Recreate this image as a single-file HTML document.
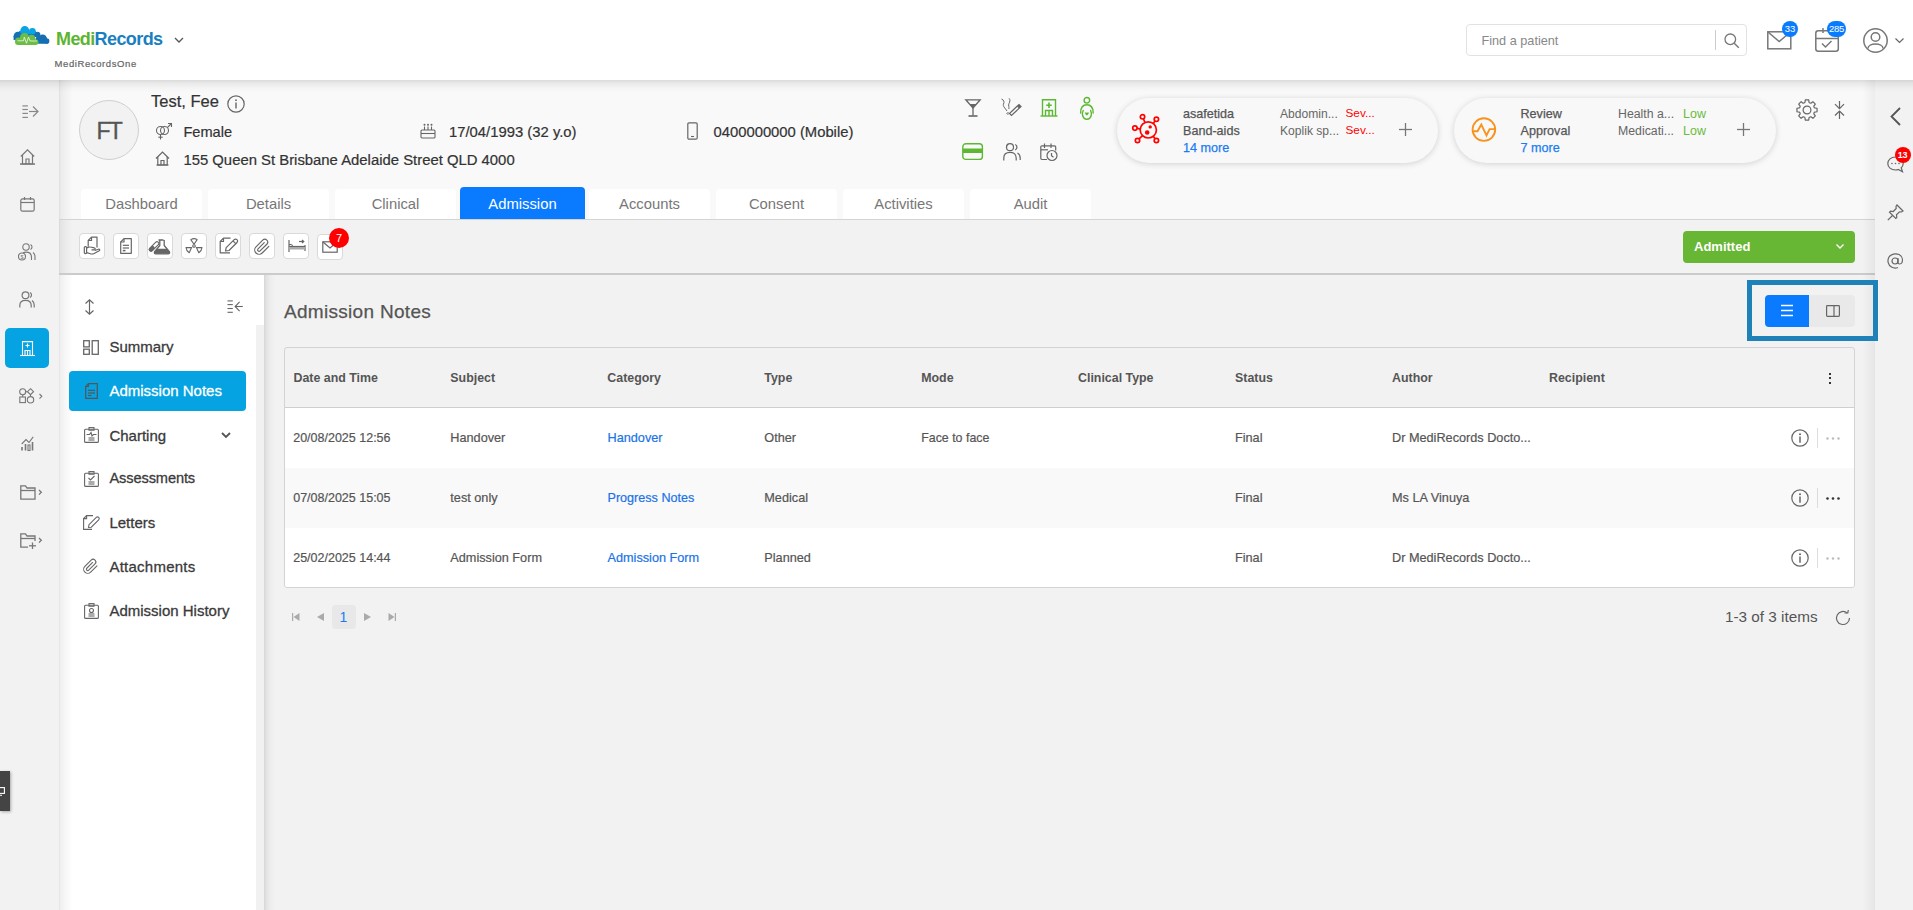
<!DOCTYPE html>
<html><head><meta charset="utf-8">
<style>
*{box-sizing:border-box;margin:0;padding:0}
html,body{width:1913px;height:910px;overflow:hidden;background:#f2f2f2;font-family:"Liberation Sans",sans-serif;color:#444}
svg{display:block;position:absolute;overflow:visible}
.t{position:absolute;white-space:nowrap;line-height:1}
#hdr{position:absolute;left:0;top:0;width:1913px;height:80px;background:#fff;z-index:5}
#hsh{position:absolute;left:0;top:80px;width:1913px;height:12px;background:linear-gradient(to bottom,rgba(0,0,0,.12),rgba(0,0,0,.065) 25%,rgba(0,0,0,.025) 65%,rgba(0,0,0,0));z-index:4;pointer-events:none}
#rail{position:absolute;left:0;top:80px;width:59px;height:830px;background:#f2f2f2;z-index:3}
#ph{position:absolute;left:59px;top:80px;width:1816px;height:140px;background:#f9f9f9;border-bottom:1px solid #d4d4d4}
#tb{position:absolute;left:59px;top:220px;width:1816px;height:55px;background:#f2f2f2;border-bottom:2px solid #cbcbcb}
.shl{position:absolute;left:0;top:0;width:14px;height:100%;background:linear-gradient(to right,rgba(0,0,0,.11),rgba(0,0,0,.06) 12%,rgba(0,0,0,.03) 45%,rgba(0,0,0,0))}
#side{position:absolute;left:59px;top:275px;width:205px;height:635px;background:#fff}
#track{position:absolute;left:256px;top:325px;width:8px;height:585px;background:#f1f1f1}
#content{position:absolute;left:264px;top:275px;width:1611px;height:635px;background:#f2f2f2}
#rrail{position:absolute;left:1875px;top:80px;width:38px;height:830px;background:#f2f2f2}
.rsh{position:absolute;left:1862px;top:80px;width:13px;height:830px;background:linear-gradient(to right,rgba(0,0,0,0),rgba(0,0,0,.05))}
.tab{position:absolute;top:189px;width:121px;height:30px;background:#fff;border-radius:4px 4px 0 0;color:#777;font-size:14.8px;text-align:center;line-height:30px}
.tab.act{top:187px;width:125px;height:32px;background:#0a7bff;color:#fff;line-height:35px}
.tbtn{position:absolute;top:233px;width:26px;height:26px;background:#fff;border:1px solid #d9d9d9;border-radius:4px}
.pill{position:absolute;top:98px;height:65px;border-radius:33px;background:#f8f8f8;box-shadow:0 1px 6px rgba(0,0,0,.16)}
.ps{font-size:12.6px;color:#555}
.sb{-webkit-text-stroke:.25px #555}
.mi{font-size:15px;color:#3a3a3a;-webkit-text-stroke:.3px #3a3a3a}
.th{font-size:12.4px;font-weight:bold;color:#555}
.td{font-size:12.7px;color:#555;-webkit-text-stroke:.2px #555}
.lk{color:#1a73e8;-webkit-text-stroke:.2px #1a73e8}
</style></head>
<body>
<!-- HEADER -->
<div id="hdr">
  <!-- logo -->
  <svg style="left:10px;top:20px" width="42" height="30" viewBox="0 0 42 30">
    
    <g fill="#0aa3e3"><circle cx="14.8" cy="10.6" r="4.5"/><circle cx="22.4" cy="11.3" r="3.4"/><rect x="9" y="11" width="17" height="4"/></g><rect x="9" y="14" width="17" height="3" fill="#1678bb"/>
    <g fill="#1570b5"><circle cx="8" cy="16.2" r="4.4"/><rect x="3.6" y="16" width="8" height="4"/><circle cx="27.5" cy="14.5" r="2.8"/></g>
    <g fill="#146fb2"><circle cx="32.6" cy="18.8" r="4.4"/><circle cx="36.6" cy="21" r="2.8"/><circle cx="28.5" cy="19.5" r="3"/><rect x="26" y="19" width="13" height="4.7" rx="2"/></g>
    <g fill="#6cbd45"><circle cx="14.5" cy="17.5" r="4.6"/><circle cx="21.6" cy="18.4" r="3.6"/><circle cx="8.4" cy="20.6" r="3.2"/><rect x="5.1" y="19.5" width="23.4" height="5.4" rx="2.4"/></g>
    <polyline points="7.5,20.8 13.5,20.8 14.3,17.2 16.5,23.2 18.5,17.2 20.1,21 27,21" fill="none" stroke="#fff" stroke-width=".8" stroke-opacity=".9"/>
  </svg>
  <div class="t" style="left:56px;top:29.5px;font-size:18px;font-weight:bold;letter-spacing:-.6px"><span style="color:#5cb531">Medi</span><span style="color:#1a7fc1">Records</span></div>
  <svg style="left:174px;top:37px" width="10" height="6" viewBox="0 0 10 6"><polyline points="1,1 5,5 9,1" fill="none" stroke="#555" stroke-width="1.3"/></svg>
  <div class="t" style="left:54.5px;top:58.5px;font-size:9.5px;letter-spacing:.6px;color:#666;-webkit-text-stroke:.2px #666">MediRecordsOne</div>
  <!-- search -->
  <div style="position:absolute;left:1466px;top:24px;width:281px;height:32px;border:1px solid #e2e2e2;border-radius:4px;background:#fff"></div>
  <div class="t" style="left:1481.5px;top:35px;font-size:12.7px;color:#888">Find a patient</div>
  <div style="position:absolute;left:1715px;top:30px;width:1px;height:20px;background:#ccc"></div>
  <svg style="left:1724px;top:32.5px" width="16" height="16" viewBox="0 0 16 16"><circle cx="6.3" cy="6.3" r="5.3" fill="none" stroke="#777" stroke-width="1.3"/><line x1="10.2" y1="10.2" x2="14.8" y2="14.8" stroke="#777" stroke-width="1.4"/></svg>
  <!-- mail -->
  <svg style="left:1767px;top:31px" width="25" height="19" viewBox="0 0 25 19"><rect x=".8" y=".8" width="23" height="17" fill="none" stroke="#777" stroke-width="1.5"/><polyline points="1,1 12.2,10.5 23.5,1" fill="none" stroke="#777" stroke-width="1.5"/></svg>
  <div style="position:absolute;left:1782px;top:21px;width:16px;height:16px;border-radius:8px;background:#0a7bff;color:#fff;font-size:9.5px;line-height:16px;text-align:center">33</div>
  <!-- calendar -->
  <svg style="left:1815px;top:28px" width="25" height="24" viewBox="0 0 25 24"><rect x=".8" y="2.8" width="22.5" height="20.5" rx="2.5" fill="none" stroke="#777" stroke-width="1.5"/><line x1="1" y1="10.5" x2="23" y2="10.5" stroke="#777" stroke-width="1.5"/><line x1="8" y1="0" x2="8" y2="5" stroke="#777" stroke-width="1.5"/><polyline points="7,15.5 10.5,19 16.5,13" fill="none" stroke="#777" stroke-width="1.5"/></svg>
  <div style="position:absolute;left:1827px;top:21px;width:19px;height:16px;border-radius:8px;background:#0a7bff;color:#fff;font-size:9.5px;line-height:16px;text-align:center;letter-spacing:-.3px">285</div>
  <!-- user -->
  <svg style="left:1863px;top:28px" width="25" height="25" viewBox="0 0 25 25"><circle cx="12.5" cy="12.5" r="11.7" fill="none" stroke="#777" stroke-width="1.5"/><circle cx="12.5" cy="9" r="4.3" fill="none" stroke="#777" stroke-width="1.5"/><path d="M5 20.5 C5 14.5 20 14.5 20 20.5" fill="none" stroke="#777" stroke-width="1.5"/></svg>
  <svg style="left:1895px;top:37.5px" width="9" height="5" viewBox="0 0 9 5"><polyline points=".5,.5 4.5,4.5 8.5,.5" fill="none" stroke="#666" stroke-width="1.2"/></svg>
</div>

<div id="hsh"></div>
<!-- LEFT RAIL -->
<div id="rail">
<svg style="left:22px;top:25px" width="17" height="13" viewBox="0 0 17 13"><g fill="none" stroke="#888" stroke-width="1.2"><line x1=".4" y1=".9" x2="5.9" y2=".9"/><line x1=".4" y1="4.5" x2="5.9" y2="4.5"/><line x1=".4" y1="8.4" x2="5.9" y2="8.4"/><line x1=".4" y1="12.4" x2="5.9" y2="12.4"/><line x1="7" y1="6.5" x2="16" y2="6.5"/><polyline points="11,1.5 16,6.5 11,11.5"/></g></svg>
<svg style="left:20px;top:68.5px" width="15" height="16" viewBox="0 0 15 16"><g fill="none" stroke="#777" stroke-width="1.2"><polyline points=".8,7.5 7.5,.8 14.2,7.5"/><polyline points="2.5,6 2.5,15 12.5,15 12.5,6"/><polyline points="6,15 6,10 9,10 9,15"/><line x1="0" y1="15" x2="15" y2="15" stroke-width="1.5"/></g></svg>
<svg style="left:20px;top:117px" width="15" height="15" viewBox="0 0 15 15"><g fill="none" stroke="#777" stroke-width="1.2"><rect x=".8" y="1.8" width="13.4" height="12.4" rx="1.8"/><line x1="1" y1="5.5" x2="14" y2="5.5"/><line x1="4.5" y1="0" x2="4.5" y2="3"/><line x1="10.5" y1="0" x2="10.5" y2="3"/></g></svg>
<svg style="left:18px;top:163px" width="18" height="18" viewBox="0 0 18 18"><g fill="none" stroke="#777" stroke-width="1.1"><circle cx="8" cy="4" r="3.2"/><path d="M12.5 1.5 C14.5 2.5 14.5 5.5 12.5 6.5"/><path d="M5 9.7 C6 9.3 7 9.1 8 9.1 C11.5 9.1 13.5 11 13.5 14.5 L13.5 17"/><path d="M15 9.5 C16.5 10.5 17 12 17 14 L17 17"/><circle cx="4" cy="13.5" r="3.5"/></g><text x="4" y="15.8" font-size="5.5" text-anchor="middle" fill="#777" font-family="Liberation Sans">$</text></svg>
<svg style="left:18.5px;top:211px" width="16" height="17" viewBox="0 0 16 17"><g fill="none" stroke="#777" stroke-width="1.2"><circle cx="6.5" cy="4.2" r="3.4"/><path d="M11 1.5 C13 2.5 13 5.5 11 6.5"/><path d="M.8 16.5 L.8 14.5 C.8 11 3 9.3 6.5 9.3 C10 9.3 12.2 11 12.2 14.5 L12.2 16.5"/><path d="M13 9.5 C14.5 10.5 15.2 12 15.2 14 L15.2 16.5"/></g></svg>
<div style="position:absolute;left:5px;top:248px;width:44px;height:40px;border-radius:5px;background:#05a3e2"></div>
<svg style="left:19.5px;top:260.5px" width="15" height="15" viewBox="0 0 15 15"><g fill="none" stroke="#fff" stroke-width="1.1"><path d="M2.5 14.5 L2.5 .6 L12.5 .6 L12.5 14.5"/><line x1="0" y1="14.5" x2="15" y2="14.5"/><path d="M5 14.5 L5 9.5 L10 9.5 L10 14.5"/><line x1="7.5" y1="9.5" x2="7.5" y2="14.5"/><line x1="7.5" y1="2.5" x2="7.5" y2="6.5"/><line x1="5.5" y1="4.5" x2="9.5" y2="4.5"/></g></svg>
<svg style="left:18.5px;top:307.5px" width="24" height="16" viewBox="0 0 24 16"><g fill="none" stroke="#777" stroke-width="1.1"><circle cx="3.7" cy="3.7" r="3"/><path d="M11.5 .7 L14.5 3.7 L11.5 6.7 L8.5 3.7Z"/><rect x=".8" y="9" width="5.6" height="5.6"/><circle cx="11.5" cy="11.8" r="3.2"/><line x1="3.7" y1="6.7" x2="3.7" y2="9"/><line x1="6.5" y1="3.7" x2="8.5" y2="3.7"/><line x1="11.5" y1="6.7" x2="11.5" y2="8.6"/><polyline points="20.5,6 22.8,8.3 20.5,10.6"/></g></svg>
<svg style="left:21px;top:356px" width="13" height="15" viewBox="0 0 13 15"><g fill="none" stroke="#777" stroke-width="1.1"><polyline points=".7,8 5,3.5 8,6.5 12.2,.8"/><line x1="1" y1="11" x2="1" y2="14.5" stroke-width="1.6"/><line x1="4.5" y1="8" x2="4.5" y2="14.5" stroke-width="1.6"/><rect x="7" y="9" width="2" height="5.5"/><line x1="11.5" y1="6" x2="11.5" y2="14.5" stroke-width="1.6"/></g></svg>
<svg style="left:20px;top:405px" width="22" height="15" viewBox="0 0 22 15"><g fill="none" stroke="#777" stroke-width="1.3"><path d="M.8 14.2 L.8 .8 L5.5 .8 L7 3 L15 3 L15 14.2Z"/><line x1="1" y1="5.5" x2="15" y2="5.5"/><polyline points="19,5 21.3,7.3 19,9.6"/></g></svg>
<svg style="left:20px;top:453px" width="22" height="16" viewBox="0 0 22 16"><g fill="none" stroke="#777" stroke-width="1.3"><path d="M8 14.2 L.8 14.2 L.8 .8 L5.5 .8 L7 3 L15 3 L15 8"/><line x1="1" y1="5.5" x2="15" y2="5.5"/><line x1="12.5" y1="9.5" x2="12.5" y2="16"/><line x1="9" y1="12.8" x2="16" y2="12.8"/><polyline points="19,5 21.3,7.3 19,9.6"/></g></svg>
</div>

<!-- PATIENT HEADER -->
<div id="ph"><div class="shl"></div></div>
<div style="position:absolute;left:79px;top:100px;width:60px;height:60px;border-radius:30px;background:#f2f2f2;border:1px solid #cfcfcf"></div>
<div class="t" style="left:96.6px;top:120px;font-size:23px;color:#555;letter-spacing:-1.8px;-webkit-text-stroke:.35px #555">FT</div>
<div class="t" style="left:151px;top:93px;font-size:16.5px;color:#333;-webkit-text-stroke:.2px #333">Test, Fee</div>
<svg style="left:227px;top:95px" width="18" height="18" viewBox="0 0 18 18"><circle cx="9" cy="9" r="8.2" fill="none" stroke="#666" stroke-width="1.2"/><circle cx="9" cy="5.2" r=".9" fill="#666"/><line x1="9" y1="7.5" x2="9" y2="13.5" stroke="#666" stroke-width="1.4"/></svg>

<div class="t" style="left:183.4px;top:125px;font-size:14.6px;color:#333;-webkit-text-stroke:.2px #333">Female</div>
<div class="t" style="left:449px;top:124.5px;font-size:14.84px;color:#333;-webkit-text-stroke:.2px #333">17/04/1993 (32 y.o)</div>
<div class="t" style="left:713.5px;top:124.5px;font-size:14.81px;color:#333;-webkit-text-stroke:.2px #333">0400000000 (Mobile)</div>
<div class="t" style="left:183.4px;top:153.3px;font-size:14.86px;color:#333;-webkit-text-stroke:.2px #333">155 Queen St Brisbane Adelaide Street QLD 4000</div>

<!-- patient icons -->
<svg style="left:155px;top:122px" width="18" height="18" viewBox="0 0 18 18"><g fill="none" stroke="#666" stroke-width="1.1"><circle cx="5.5" cy="8.5" r="4"/><circle cx="9.5" cy="8.5" r="4"/><line x1="5.5" y1="12.5" x2="5.5" y2="17.5"/><line x1="3.3" y1="15.2" x2="7.7" y2="15.2"/><line x1="12.3" y1="5.7" x2="16.5" y2="1.5"/><polyline points="13,1.5 16.5,1.5 16.5,5"/></g></svg>
<svg style="left:155px;top:151px" width="15" height="15" viewBox="0 0 15 15"><g fill="none" stroke="#666" stroke-width="1.2"><polyline points="1,7.5 7.5,1 14,7.5"/><polyline points="2.8,6 2.8,14 12.2,14 12.2,6"/><polyline points="6,14 6,9.5 9,9.5 9,14"/><line x1="1.5" y1="14" x2="13.5" y2="14"/></g></svg>
<svg style="left:420px;top:123px" width="16" height="16" viewBox="0 0 16 16"><g fill="none" stroke="#666" stroke-width="1.1"><rect x="1" y="7" width="14" height="8" rx="1"/><line x1="1" y1="10.5" x2="15" y2="10.5"/><line x1="4.5" y1="3.5" x2="4.5" y2="7"/><line x1="8" y1="3.5" x2="8" y2="7"/><line x1="11.5" y1="3.5" x2="11.5" y2="7"/></g><circle cx="4.5" cy="1.8" r="1" fill="#666"/><circle cx="8" cy="1.8" r="1" fill="#666"/><circle cx="11.5" cy="1.8" r="1" fill="#666"/></svg>
<svg style="left:687px;top:122px" width="11" height="18" viewBox="0 0 11 18"><rect x=".8" y=".8" width="9.4" height="16.4" rx="1.2" fill="none" stroke="#666" stroke-width="1.2"/><line x1="4" y1="14.5" x2="7" y2="14.5" stroke="#666" stroke-width="1.1"/></svg>

<svg style="left:965px;top:99px" width="16" height="18" viewBox="0 0 16 18"><g fill="none" stroke="#666" stroke-width="1.3"><path d="M.8 .8 L15.2 .8 L8 9 Z"/><line x1="8" y1="9" x2="8" y2="16.5"/><line x1="3.5" y1="17" x2="12.5" y2="17" stroke-width="1.6"/></g><path d="M4.5 5 L11.5 5 L8 9Z" fill="#666"/></svg>
<svg style="left:1001px;top:98px" width="21" height="19" viewBox="0 0 21 19"><g fill="none" stroke="#666" stroke-width="1"><path d="M.5 1 C3 2 3.5 4 2.5 6 C1.5 8 4 10 6 13"/><path d="M8 .3 C9.5 2 9 3.5 8 5.5 C7 7.5 8.5 9 7.8 11"/><line x1="5.5" y1="15" x2="7.2" y2="16.8"/><line x1="6.5" y1="14" x2="8.2" y2="15.8"/></g><path d="M8.5 15.5 L18 6.5 L20 8.5 L10.5 17.5Z" fill="none" stroke="#666" stroke-width="1.2"/><path d="M16 8.4 L18 6.5 L20 8.5 L18 10.4Z" fill="#666"/></svg>
<svg style="left:1040px;top:99px" width="18" height="18" viewBox="0 0 18 18"><g fill="none" stroke="#5cb832" stroke-width="1.4"><path d="M2.5 17 L2.5 .8 L15.5 .8 L15.5 17"/><line x1=".5" y1="17" x2="17.5" y2="17"/><path d="M5.5 17 L5.5 11.5 L12.5 11.5 L12.5 17"/><line x1="9" y1="11.5" x2="9" y2="17"/></g><path d="M8.2 3.5h1.6v2h2v1.6h-2v2H8.2v-2h-2V5.5h2z" fill="#5cb832"/></svg>
<svg style="left:1080px;top:96.5px" width="15" height="24" viewBox="0 0 15 24"><g fill="none" stroke="#5cb832" stroke-width="1.4" stroke-linecap="round"><circle cx="6.9" cy="3.3" r="2.8"/><path d="M.6 16 C.6 10.2 3.5 7.8 6.9 7.8 C10.3 7.8 13.2 10.2 13.2 16"/><path d="M3.2 13.5 C2.5 15 2.2 16.5 2.5 18 C3 20.5 4.8 22.2 6.9 22.2 C9 22.2 10.8 20.5 11.3 18 C11.6 16.5 11.3 15 10.6 13.5"/></g><path d="M5 15.9 C5 15 6.2 15 6.9 15.9 C7.6 15 8.8 15 8.8 15.9 C8.8 16.9 6.9 18.4 6.9 18.4 C6.9 18.4 5 16.9 5 15.9Z" fill="#5cb832"/></svg>
<svg style="left:962px;top:143px" width="22" height="18" viewBox="0 0 22 18"><rect x=".8" y=".8" width="19.6" height="15.6" rx="3" fill="none" stroke="#5cb832" stroke-width="1.4"/><rect x="1" y="5.5" width="19.4" height="4.5" fill="#5cb832"/></svg>
<svg style="left:1002.5px;top:143px" width="18" height="18" viewBox="0 0 18 18"><g fill="none" stroke="#666" stroke-width="1.2"><circle cx="7" cy="4.2" r="3.5"/><path d="M12.2 1.5 C14.5 2.5 14.5 6 12.2 7"/><path d="M.8 17.5 L.8 15 C.8 11 3.5 9.3 7 9.3 C10.5 9.3 13.2 11 13.2 15 L13.2 17.5"/><path d="M14.5 10 C16.5 11 17.2 13 17.2 15 L17.2 17"/></g></svg>
<svg style="left:1040px;top:143px" width="18" height="18" viewBox="0 0 18 18"><g fill="none" stroke="#666" stroke-width="1.2"><path d="M7 16.5 L2 16.5 C1.3 16.5 .8 16 .8 15.3 L.8 4 C.8 3.3 1.3 2.8 2 2.8 L14.5 2.8 C15.2 2.8 15.7 3.3 15.7 4 L15.7 7.5"/><line x1="4.5" y1=".5" x2="4.5" y2="5"/><line x1="11" y1=".5" x2="11" y2="5"/><line x1="1" y1="6.8" x2="8" y2="6.8"/><circle cx="12" cy="12.5" r="5"/><polyline points="11.5,10 11.5,12.8 13.5,14.3"/></g></svg>

<!-- pills -->
<div class="pill" style="left:1117px;width:321px"></div>
<svg style="left:1132px;top:114px" width="28" height="30" viewBox="0 0 28 30"><g fill="none" stroke="#f00" stroke-width="1.7"><circle cx="16.3" cy="15.9" r="8.1"/><circle cx="10.5" cy="2.8" r="2.2"/><line x1="11.39" y1="4.81" x2="13.02" y2="8.49"/><circle cx="24.4" cy="5.3" r="2.2"/><line x1="23.06" y1="7.05" x2="21.22" y2="9.46"/><circle cx="2.9" cy="14.1" r="2.2"/><line x1="5.08" y1="14.39" x2="8.27" y2="14.82"/><circle cx="5.5" cy="26.5" r="2.2"/><line x1="7.07" y1="24.96" x2="10.52" y2="21.57"/><circle cx="24.4" cy="26.5" r="2.2"/><line x1="23.06" y1="24.75" x2="21.22" y2="22.34"/></g><circle cx="15.2" cy="18.5" r="2.3" fill="#f00"/><circle cx="18.2" cy="12.9" r="1.7" fill="#f00"/></svg>
<div class="t ps sb" style="left:1183px;top:108px">asafetida</div>
<div class="t ps sb" style="left:1183px;top:124.8px">Band-aids</div>
<div class="t ps sb" style="left:1183px;top:141.7px;color:#1a7cf5;-webkit-text-stroke-color:#1a7cf5">14 more</div>
<div class="t ps" style="left:1280px;top:108px;font-size:12.1px;color:#666">Abdomin...</div>
<div class="t ps" style="left:1280px;top:124.8px;font-size:12.1px;color:#666">Koplik sp...</div>
<div class="t ps" style="left:1345.5px;top:108px;font-size:11.8px;color:#f00">Sev...</div>
<div class="t ps" style="left:1345.5px;top:124.8px;font-size:11.8px;color:#f00">Sev...</div>
<svg style="left:1398.5px;top:123.3px" width="13" height="13" viewBox="0 0 13 13"><line x1="6.5" y1="0" x2="6.5" y2="13" stroke="#777" stroke-width="1.3"/><line x1="0" y1="6.5" x2="13" y2="6.5" stroke="#777" stroke-width="1.3"/></svg>

<div class="pill" style="left:1454px;width:322px"></div>
<svg style="left:1471px;top:116px" width="26" height="28" viewBox="0 0 26 28"><circle cx="12.9" cy="13.6" r="11.3" fill="none" stroke="#f7931e" stroke-width="1.9"/><polyline points="1.8,15.3 6.5,15.3 10.3,8.5 15.5,19.3 18.6,13.1 24.2,13.1" fill="none" stroke="#f7931e" stroke-width="1.9" stroke-linejoin="miter"/></svg>
<div class="t ps sb" style="left:1520.5px;top:108px">Review</div>
<div class="t ps sb" style="left:1520.5px;top:124.8px">Approval</div>
<div class="t ps sb" style="left:1520.5px;top:141.7px;color:#1a7cf5;-webkit-text-stroke-color:#1a7cf5">7 more</div>
<div class="t ps" style="left:1618px;top:108px;font-size:12.3px;color:#666">Health a...</div>
<div class="t ps" style="left:1618px;top:124.8px;font-size:12.3px;color:#666">Medicati...</div>
<div class="t ps" style="left:1683px;top:108px;font-size:12.5px;color:#6cbb3c">Low</div>
<div class="t ps" style="left:1683px;top:124.8px;font-size:12.5px;color:#6cbb3c">Low</div>
<svg style="left:1737px;top:123.3px" width="13" height="13" viewBox="0 0 13 13"><line x1="6.5" y1="0" x2="6.5" y2="13" stroke="#777" stroke-width="1.3"/><line x1="0" y1="6.5" x2="13" y2="6.5" stroke="#777" stroke-width="1.3"/></svg>
<svg style="left:1796px;top:99px" width="22" height="22" viewBox="0 0 22 22"><path d="M8.97 3.37 L9.27 0.95 L12.73 0.95 L13.03 3.37 L13.91 3.98 L14.96 4.17 L16.89 2.67 L19.33 5.11 L17.83 7.04 L18.02 8.09 L18.63 8.97 L21.05 9.27 L21.05 12.73 L18.63 13.03 L18.02 13.91 L17.83 14.96 L19.33 16.89 L16.89 19.33 L14.96 17.83 L13.91 18.02 L13.03 18.63 L12.73 21.05 L9.27 21.05 L8.97 18.63 L8.09 18.02 L7.04 17.83 L5.11 19.33 L2.67 16.89 L4.17 14.96 L3.98 13.91 L3.37 13.03 L0.95 12.73 L0.95 9.27 L3.37 8.97 L3.98 8.09 L4.17 7.04 L2.67 5.11 L5.11 2.67 L7.04 4.17 L8.09 3.98Z" fill="none" stroke="#666" stroke-width="1.2" stroke-linejoin="round"/><circle cx="11" cy="11" r="3.9" fill="none" stroke="#666" stroke-width="1.2"/></svg>
<svg style="left:1834px;top:101px" width="11" height="18" viewBox="0 0 11 18"><g fill="none" stroke="#666" stroke-width="1.2"><line x1="5.5" y1="0" x2="5.5" y2="7.7"/><polyline points="1,3.2 5.5,7.7 10,3.2"/><line x1="5.5" y1="10" x2="5.5" y2="18"/><polyline points="1,14.5 5.5,10 10,14.5"/></g></svg>

<!-- TABS -->
<div class="tab" style="left:81px">Dashboard</div>
<div class="tab" style="left:208px">Details</div>
<div class="tab" style="left:335px">Clinical</div>
<div class="tab act" style="left:460px">Admission</div>
<div class="tab" style="left:589px">Accounts</div>
<div class="tab" style="left:716px">Consent</div>
<div class="tab" style="left:843px">Activities</div>
<div class="tab" style="left:970px">Audit</div>

<!-- TOOLBAR -->
<div id="tb"><div class="shl"></div></div>
<div class="tbtn" style="left:79px"></div>
<div class="tbtn" style="left:113px"></div>
<div class="tbtn" style="left:147px"></div>
<div class="tbtn" style="left:181px"></div>
<div class="tbtn" style="left:215px"></div>
<div class="tbtn" style="left:249px"></div>
<div class="tbtn" style="left:283px"></div>
<div class="tbtn" style="left:317px;top:234px"></div>
<!-- toolbar icons -->
<svg style="left:83px;top:236px" width="18" height="19" viewBox="0 0 18 19"><g fill="none" stroke="#666" stroke-width="1.2" stroke-linejoin="round"><path d="M5.2 10.8 V4.5 L8.5 1.2 H14 V11.5"/><path d="M5.2 4.5 H8.5 V1.2"/><rect x="1.3" y="10.6" width="2.3" height="7" rx="1"/><path d="M3.6 11.8 L6.5 11 C8 10.8 10 11.6 11.5 12 C12.6 12.3 12.4 13.8 11.3 13.8 L8.5 13.8"/><path d="M3.6 16.6 L7.5 17.8 C9 18.2 10.2 18 11.2 17.5 L16.2 14.8 C17.2 14.2 16.7 12.8 15.5 13.2 L11.8 14.5"/></g></svg>
<svg style="left:120px;top:238px" width="12" height="16" viewBox="0 0 12 16"><g fill="none" stroke="#666" stroke-width="1.2" stroke-linejoin="round"><path d="M.7 15.3 V4 L4 .7 H11.3 V15.3Z"/><path d="M.7 4 H4 V.7"/><line x1="2.8" y1="7.3" x2="9" y2="7.3"/><line x1="2.8" y1="10" x2="9" y2="10"/><line x1="2.8" y1="12.6" x2="5.5" y2="12.6" stroke-width="1.5"/></g></svg>
<svg style="left:149px;top:238.5px" width="22" height="16" viewBox="0 0 22 16"><path d="M9.5 1 H14.5 M10.8 1 V6.5 L5.8 12.5 C4.8 13.8 5.5 14.8 7 14.8 H19 C20.5 14.8 21.2 13.8 20.2 12.5 L15.2 6.5 V1" fill="none" stroke="#666" stroke-width="1.3" stroke-linejoin="round"/><path d="M8 9.8 H18 L20.2 12.5 C21.2 13.8 20.5 14.8 19 14.8 H7 C5.5 14.8 4.8 13.8 5.8 12.5Z" fill="#666"/><g transform="rotate(45 5 7.5)"><rect x="3.2" y="1.5" width="3.6" height="12" rx="1.6" fill="none" stroke="#666" stroke-width="1.2"/><rect x="3.2" y="7.5" width="3.6" height="6" rx="1.4" fill="#666"/></g></svg>
<svg style="left:185px;top:238px" width="18" height="16" viewBox="0 0 18 16"><g fill="none" stroke="#666" stroke-width="1.1" stroke-linejoin="round"><path d="M5.8 1.6 C7.8 .4 10.2 .4 12.2 1.6 L9 6.2Z"/><circle cx="9" cy="8" r="1.3"/><path d="M1 9.5 L6.6 9.6 L4.2 14.8 C2.3 13.6 1.2 11.8 1 9.5Z"/><path d="M17 9.5 L11.4 9.6 L13.8 14.8 C15.7 13.6 16.8 11.8 17 9.5Z"/></g></svg>
<svg style="left:219px;top:237px" width="20" height="17" viewBox="0 0 20 17"><g fill="none" stroke="#666" stroke-width="1.2" stroke-linejoin="round"><path d="M11 15.8 H1.2 V4.5 L4.5 1.2 H11.5"/><path d="M1.2 4.5 H4.5 V1.2"/><path d="M6.5 14 L7.2 10.7 L15.2 2.7 C16 1.9 17.2 1.9 18 2.7 C18.8 3.5 18.8 4.7 18 5.5 L10 13.5Z"/><line x1="14" y1="3.9" x2="16.8" y2="6.7"/></g></svg>
<svg style="left:253.5px;top:238.5px" width="16" height="16" viewBox="1 1 22 22"><path d="M21.44 11.05l-9.19 9.19a6 6 0 0 1-8.49-8.49l9.19-9.19a4 4 0 0 1 5.66 5.66l-9.2 9.19a2 2 0 0 1-2.83-2.83l8.49-8.48" fill="none" stroke="#666" stroke-width="1.6" stroke-linecap="round"/></svg>
<svg style="left:287.5px;top:240px" width="18" height="12" viewBox="0 0 18 12"><g fill="none" stroke="#666" stroke-width="1.2"><line x1="1" y1="0" x2="1" y2="12"/><line x1="17" y1="5" x2="17" y2="11"/><line x1="1" y1="6.5" x2="17" y2="6.5"/><path d="M1 4.5 L3 4.5 C4 4.5 4.5 5.5 4.5 6.5"/><line x1="11" y1="1.5" x2="15.5" y2="1.5"/><polyline points="14,0 15.7,1.5 14,3"/></g><rect x="1" y="7" width="16" height="2.5" fill="#aaa"/></svg>
<svg style="left:322px;top:241px" width="16" height="12" viewBox="0 0 16 12"><rect x=".8" y=".8" width="14.4" height="10.4" fill="none" stroke="#666" stroke-width="1.2"/><polyline points="1,1 8,7 15,1" fill="none" stroke="#666" stroke-width="1.2"/></svg>
<div style="position:absolute;left:329px;top:228px;width:20px;height:20px;border-radius:10px;background:#f00;color:#fff;font-size:11px;line-height:20px;text-align:center">7</div>
<div style="position:absolute;left:1683px;top:231px;width:172px;height:32px;border-radius:4px;background:#67b634"></div>
<div class="t" style="left:1694px;top:240.4px;font-size:13px;font-weight:bold;color:#fff">Admitted</div>
<svg style="left:1836px;top:244px" width="8" height="5" viewBox="0 0 8 5"><polyline points=".5,.5 4,4 7.5,.5" fill="none" stroke="#fff" stroke-width="1.4"/></svg>

<!-- SIDE MENU -->
<div id="side"><div class="shl"></div></div>
<div id="track"></div>
<div style="position:absolute;left:69px;top:371px;width:177px;height:40px;border-radius:4px;background:#05a3e2"></div>
<svg style="left:84px;top:299px" width="11" height="16" viewBox="0 0 11 16"><g fill="none" stroke="#666" stroke-width="1.2"><line x1="5.5" y1="1" x2="5.5" y2="15"/><polyline points="1.5,4.5 5.5,.8 9.5,4.5"/><polyline points="1.5,11.5 5.5,15.2 9.5,11.5"/></g></svg>
<svg style="left:227px;top:300px" width="16" height="13" viewBox="0 0 16 13"><g fill="none" stroke="#666" stroke-width="1.1"><line x1=".5" y1=".9" x2="5.8" y2=".9"/><line x1=".5" y1="4.6" x2="5.8" y2="4.6"/><line x1=".5" y1="8.5" x2="5.8" y2="8.5"/><line x1=".5" y1="12.3" x2="5.8" y2="12.3"/><line x1="8" y1="6.5" x2="15.8" y2="6.5"/><polyline points="12.6,1.8 8.1,6.5 12.6,11.2"/></g></svg>
<svg style="left:83px;top:339.5px" width="16" height="15" viewBox="0 0 16 15"><g fill="none" stroke="#666" stroke-width="1.3"><rect x=".7" y=".7" width="5.6" height="6.2"/><rect x=".7" y="9.2" width="5.6" height="5.1"/><rect x="9.2" y=".7" width="6.1" height="13.6"/></g></svg>
<svg style="left:85px;top:383px" width="13" height="16" viewBox="0 0 13 16"><g fill="none" stroke="#555" stroke-width="1.2"><path d="M.7 15.3 L.7 3.5 L3.5 .7 L12.3 .7 L12.3 15.3Z"/><path d="M.7 3.5 L3.5 3.5 L3.5 .7"/><line x1="3" y1="7.3" x2="10" y2="7.3"/><line x1="3" y1="10" x2="10" y2="10"/><line x1="3" y1="12.5" x2="6.5" y2="12.5"/></g></svg>
<svg style="left:83.5px;top:427px" width="15" height="16" viewBox="0 0 15 16"><g fill="none" stroke="#666" stroke-width="1.1"><rect x=".6" y="2.2" width="13.8" height="13.2" rx="1"/><rect x="5" y=".6" width="5" height="2.6"/><polyline points="2.5,7.5 5.5,7.5 7,5.5 8,9 9.5,7.5 12.5,7.5"/><line x1="4.5" y1="11" x2="10.5" y2="11"/><line x1="4.5" y1="13" x2="10.5" y2="13"/></g></svg>
<svg style="left:83.5px;top:471px" width="15" height="16" viewBox="0 0 15 16"><g fill="none" stroke="#666" stroke-width="1.1"><rect x=".6" y="2.2" width="13.8" height="13.2" rx="1"/><rect x="5" y=".6" width="5" height="2.6"/><polyline points="4.5,7 6.5,9 10.5,5"/><line x1="4.5" y1="11" x2="10.5" y2="11"/><line x1="4.5" y1="13" x2="10.5" y2="13"/></g></svg>
<svg style="left:82.5px;top:515px" width="18" height="15" viewBox="0 0 18 15"><g fill="none" stroke="#666" stroke-width="1.1"><path d="M9 14.4 L.6 14.4 L.6 3.6 L3.6 .6 L10 .6"/><path d="M.6 3.6 L3.6 3.6 L3.6 .6"/><path d="M5.5 12.5 L6 9.7 L13.3 2.4 C14 1.7 15 1.7 15.7 2.4 C16.4 3.1 16.4 4.1 15.7 4.8 L8.3 12.2Z"/></g></svg>
<svg style="left:83px;top:559px" width="15" height="15" viewBox="1 1 22 22"><path d="M21.44 11.05l-9.19 9.19a6 6 0 0 1-8.49-8.49l9.19-9.19a4 4 0 0 1 5.66 5.66l-9.2 9.19a2 2 0 0 1-2.83-2.83l8.49-8.48" fill="none" stroke="#666" stroke-width="1.6" stroke-linecap="round"/></svg>
<svg style="left:83.5px;top:603px" width="15" height="16" viewBox="0 0 15 16"><g fill="none" stroke="#666" stroke-width="1.1"><rect x=".6" y="2.2" width="13.8" height="13.2" rx="1"/><rect x="5" y=".6" width="5" height="2.6"/><circle cx="7.5" cy="7.5" r="2"/><line x1="4.5" y1="11" x2="10.5" y2="11"/><line x1="4.5" y1="13" x2="10.5" y2="13"/></g></svg>
<svg style="left:221px;top:432px" width="10" height="6" viewBox="0 0 10 6"><polyline points="1,1 5,5 9,1" fill="none" stroke="#555" stroke-width="1.8"/></svg>
<div class="t mi" style="left:109.4px;top:339px">Summary</div>
<div class="t mi" style="left:109.4px;top:383.3px;color:#fff;-webkit-text-stroke:.3px #fff">Admission Notes</div>
<div class="t mi" style="left:109.4px;top:427.8px">Charting</div>
<div class="t mi" style="left:109.4px;top:471.3px;font-size:14.6px;letter-spacing:-.1px">Assessments</div>
<div class="t mi" style="left:109.4px;top:515.3px">Letters</div>
<div class="t mi" style="left:109.4px;top:558.8px;letter-spacing:.25px">Attachments</div>
<div class="t mi" style="left:109.4px;top:603.3px">Admission History</div>

<!-- CONTENT -->
<div id="content"><div class="shl" style="width:12px;background:linear-gradient(to right,rgba(0,0,0,.12),rgba(0,0,0,.07) 15%,rgba(0,0,0,.02) 55%,rgba(0,0,0,0))"></div></div>
<div class="t" style="left:284px;top:302.3px;font-size:19px;letter-spacing:.3px;color:#555;-webkit-text-stroke:.25px #555">Admission Notes</div>

<div style="position:absolute;left:1747px;top:280px;width:131px;height:61px;border:5px solid #1e82b9;z-index:6"></div>
<div style="position:absolute;left:1765px;top:295px;width:44px;height:32px;border-radius:4px 0 0 4px;background:#0a7bff"></div>
<div style="position:absolute;left:1809px;top:295px;width:46px;height:32px;border-radius:0 4px 4px 0;background:#e9e9e9"></div>

<!-- table -->
<div style="position:absolute;left:284px;top:347px;width:1571px;height:241px;border:1px solid #d3d3d3;border-radius:3px;background:#f2f2f2;overflow:hidden">
  <div style="position:absolute;left:0;top:59px;width:100%;height:1px;background:#cfcfcf"></div>
  <div style="position:absolute;left:0;top:60px;width:100%;height:60px;background:#fff"></div>
  <div style="position:absolute;left:0;top:120px;width:100%;height:60px;background:#f9f9f9"></div>
  <div style="position:absolute;left:0;top:180px;width:100%;height:60px;background:#fff"></div>
</div>
<div class="t th" style="left:293.5px;top:371.7px">Date and Time</div>
<div class="t th" style="left:450.3px;top:371.7px">Subject</div>
<div class="t th" style="left:607.3px;top:371.7px">Category</div>
<div class="t th" style="left:764.3px;top:371.7px">Type</div>
<div class="t th" style="left:921.2px;top:371.7px">Mode</div>
<div class="t th" style="left:1078px;top:371.7px">Clinical Type</div>
<div class="t th" style="left:1235px;top:371.7px">Status</div>
<div class="t th" style="left:1392px;top:371.7px">Author</div>
<div class="t th" style="left:1549px;top:371.7px">Recipient</div>

<div class="t td" style="left:293.2px;top:432px;font-size:12.5px">20/08/2025 12:56</div>
<div class="t td" style="left:450.3px;top:432px">Handover</div>
<div class="t td lk" style="left:607.5px;top:432px">Handover</div>
<div class="t td" style="left:764.3px;top:432px">Other</div>
<div class="t td" style="left:921.2px;top:432px;font-size:12.4px">Face to face</div>
<div class="t td" style="left:1235px;top:432px">Final</div>
<div class="t td" style="left:1392px;top:432px">Dr MediRecords Docto...</div>

<div class="t td" style="left:293.2px;top:492px;font-size:12.5px">07/08/2025 15:05</div>
<div class="t td" style="left:450.3px;top:492px">test only</div>
<div class="t td lk" style="left:607.5px;top:492px;font-size:12.6px">Progress Notes</div>
<div class="t td" style="left:764.3px;top:492px">Medical</div>
<div class="t td" style="left:1235px;top:492px">Final</div>
<div class="t td" style="left:1392px;top:492px">Ms LA Vinuya</div>

<div class="t td" style="left:293.2px;top:552px;font-size:12.5px">25/02/2025 14:44</div>
<div class="t td" style="left:450.3px;top:552px">Admission Form</div>
<div class="t td lk" style="left:607.5px;top:552px">Admission Form</div>
<div class="t td" style="left:764.3px;top:552px">Planned</div>
<div class="t td" style="left:1235px;top:552px">Final</div>
<div class="t td" style="left:1392px;top:552px">Dr MediRecords Docto...</div>

<!-- view toggle icons -->
<svg style="left:1780px;top:304px" width="14" height="13" viewBox="0 0 14 13"><g stroke="#fff" stroke-width="1.5"><line x1="1" y1="1.5" x2="13" y2="1.5"/><line x1="1" y1="6.5" x2="13" y2="6.5"/><line x1="1" y1="11.5" x2="13" y2="11.5"/></g></svg>
<svg style="left:1826px;top:305px" width="14" height="12" viewBox="0 0 14 12"><rect x=".6" y=".6" width="12.8" height="10.8" rx=".8" fill="none" stroke="#666" stroke-width="1.2"/><line x1="8" y1=".6" x2="8" y2="11.4" stroke="#666" stroke-width="1.2"/></svg>
<!-- kebab -->
<div style="position:absolute;left:1829px;top:372.5px;width:2.2px;height:2.2px;background:#333"></div>
<div style="position:absolute;left:1829px;top:377px;width:2.2px;height:2.2px;background:#333"></div>
<div style="position:absolute;left:1829px;top:381.5px;width:2.2px;height:2.2px;background:#333"></div>
<!-- row actions -->
<svg style="left:1791px;top:428.5px" width="18" height="18" viewBox="0 0 18 18"><circle cx="9" cy="9" r="8.2" fill="none" stroke="#666" stroke-width="1.2"/><circle cx="9" cy="5.2" r="1" fill="#666"/><line x1="9" y1="7.5" x2="9" y2="13.8" stroke="#666" stroke-width="1.5"/></svg>
<div style="position:absolute;left:1817px;top:428px;width:1px;height:20px;background:#ddd"></div>
<svg style="left:1826px;top:436.5px" width="14" height="3" viewBox="0 0 14 3"><g fill="#bbb"><circle cx="1.5" cy="1.5" r="1.2"/><circle cx="7" cy="1.5" r="1.2"/><circle cx="12.5" cy="1.5" r="1.2"/></g></svg>
<svg style="left:1791px;top:488.5px" width="18" height="18" viewBox="0 0 18 18"><circle cx="9" cy="9" r="8.2" fill="none" stroke="#666" stroke-width="1.2"/><circle cx="9" cy="5.2" r="1" fill="#666"/><line x1="9" y1="7.5" x2="9" y2="13.8" stroke="#666" stroke-width="1.5"/></svg>
<div style="position:absolute;left:1817px;top:488px;width:1px;height:20px;background:#ddd"></div>
<svg style="left:1826px;top:496.5px" width="14" height="3" viewBox="0 0 14 3"><g fill="#333"><circle cx="1.5" cy="1.5" r="1.3"/><circle cx="7" cy="1.5" r="1.3"/><circle cx="12.5" cy="1.5" r="1.3"/></g></svg>
<svg style="left:1791px;top:548.5px" width="18" height="18" viewBox="0 0 18 18"><circle cx="9" cy="9" r="8.2" fill="none" stroke="#666" stroke-width="1.2"/><circle cx="9" cy="5.2" r="1" fill="#666"/><line x1="9" y1="7.5" x2="9" y2="13.8" stroke="#666" stroke-width="1.5"/></svg>
<div style="position:absolute;left:1817px;top:548px;width:1px;height:20px;background:#ddd"></div>
<svg style="left:1826px;top:556.5px" width="14" height="3" viewBox="0 0 14 3"><g fill="#bbb"><circle cx="1.5" cy="1.5" r="1.2"/><circle cx="7" cy="1.5" r="1.2"/><circle cx="12.5" cy="1.5" r="1.2"/></g></svg>
<!-- pagination -->
<svg style="left:292px;top:613px" width="8" height="8" viewBox="0 0 8 8"><rect x="0" y="0" width="1.2" height="8" fill="#aaa"/><path d="M7.5 0 L7.5 8 L1.5 4Z" fill="#aaa"/></svg>
<svg style="left:317px;top:613px" width="7" height="8" viewBox="0 0 7 8"><path d="M7 0 L7 8 L0 4Z" fill="#aaa"/></svg>
<svg style="left:364px;top:613px" width="7" height="8" viewBox="0 0 7 8"><path d="M0 0 L0 8 L7 4Z" fill="#aaa"/></svg>
<svg style="left:388px;top:613px" width="8" height="8" viewBox="0 0 8 8"><rect x="6.8" y="0" width="1.2" height="8" fill="#aaa"/><path d="M.5 0 L.5 8 L6.5 4Z" fill="#aaa"/></svg>
<svg style="left:1835px;top:609.5px" width="16" height="16" viewBox="0 0 16 16"><path d="M14.5 8 A6.5 6.5 0 1 1 12.3 3.1" fill="none" stroke="#666" stroke-width="1.2"/><polyline points="9.5,3 12.8,3 13.3,0" fill="none" stroke="#666" stroke-width="1.2"/></svg>
<div style="position:absolute;left:332px;top:605px;width:24px;height:24px;border-radius:4px;background:#e8e8e8"></div>
<div class="t" style="left:339.5px;top:610px;font-size:14px;color:#1a7cf5">1</div>
<div class="t" style="left:1725px;top:609px;font-size:15.3px;color:#555">1-3 of 3 items</div>

<!-- RIGHT RAIL -->
<div class="rsh"></div>
<div id="rrail">
<svg style="left:15px;top:27px" width="11" height="19" viewBox="0 0 11 19"><polyline points="10,1 1.5,9.5 10,18" fill="none" stroke="#555" stroke-width="1.8"/></svg>
<svg style="left:11.5px;top:75.5px" width="17" height="17" viewBox="0 0 17 17"><path d="M8.5 1 C4 1 .8 3.8 .8 7.5 C.8 11.2 4 14 8.5 14 C9.5 14 10.5 13.8 11.3 13.5 L15.5 15.8 L14.2 11.8 C15.5 10.6 16.2 9.1 16.2 7.5 C16.2 3.8 13 1 8.5 1Z" fill="none" stroke="#666" stroke-width="1.2"/><g fill="#666"><circle cx="5" cy="7.5" r=".8"/><circle cx="8.5" cy="7.5" r=".8"/><circle cx="12" cy="7.5" r=".8"/></g></svg>
<div style="position:absolute;left:19.5px;top:66.5px;width:16px;height:16px;border-radius:8px;background:#f00;color:#fff;font-size:9px;font-weight:bold;line-height:16px;text-align:center;letter-spacing:-.3px">13</div>
<svg style="left:11.5px;top:123.5px" width="17" height="17" viewBox="0 0 17 17"><g fill="none" stroke="#666" stroke-width="1.2"><path d="M10 1 L16 7 L14.5 8 L12.5 7.8 L9.5 10.8 L9.8 13.5 L8.8 14.5 L2.5 8.2 L3.5 7.2 L6.2 7.5 L9.2 4.5 L9 2.5Z"/><line x1="5.5" y1="11.5" x2=".8" y2="16.2"/></g></svg>
<svg style="left:12px;top:173px" width="17" height="16" viewBox="0 0 17 16"><circle cx="8" cy="8" r="3" fill="none" stroke="#666" stroke-width="1.2"/><path d="M11 5 L11 9.5 C11 11.5 14 11.5 15 9.5 C16 6.5 15 3 12 1.5 C8.5 0 4 1 2 4 C0 7.5 1 12 4.5 14 C6.5 15.2 9 15.3 11 14.5" fill="none" stroke="#666" stroke-width="1.2"/></svg>
</div>
<div style="position:absolute;left:0;top:771px;width:10px;height:40px;background:#444;box-shadow:1px 1px 3px rgba(0,0,0,.3);z-index:10"><svg style="left:-4px;top:16px" width="9" height="9" viewBox="0 0 9 9"><rect x=".6" y=".6" width="7.8" height="5.8" fill="none" stroke="#fff" stroke-width="1.1"/><line x1="1" y1="8.3" x2="6" y2="8.3" stroke="#fff" stroke-width="1"/></svg></div>
</body></html>
